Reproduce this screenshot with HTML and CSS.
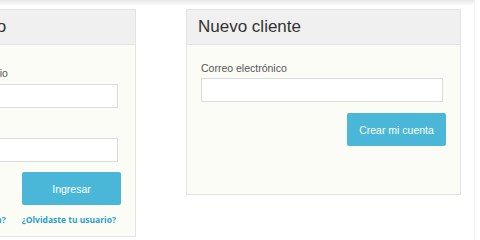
FILE: index.html
```html
<!DOCTYPE html>
<html lang="es">
<head>
  <meta charset="UTF-8" />
  <meta name="viewport" content="width=device-width, initial-scale=1.0"/>
  <title>Acceso</title>
  <link rel="stylesheet" href="styles.css">
</head>
<body>

<div class="shell">
  <div class="row">

    <div class="panel panel-login">
      <div class="panel-title">Cliente registrado</div>
      <div class="panel-body">
        <div class="field">
          <label class="label">Correo electrónico o usuario</label>
          <input class="input" type="text">
        </div>
        <div class="field">
          <label class="label">Contraseña</label>
          <input class="input" type="password">
        </div>
        <div class="actions">
          <button class="btn">Ingresar</button>
        </div>
        <div class="links">
          <a href="#">¿Olvidaste tu contraseña?</a>
          <a href="#">¿Olvidaste tu usuario?</a>
        </div>
      </div>
    </div>

    <div class="panel panel-new">
      <div class="panel-title">Nuevo cliente</div>
      <div class="panel-body">
        <div class="field">
          <label class="label">Correo electrónico</label>
          <input class="input" type="email">
        </div>
        <div class="actions">
          <button class="btn">Crear mi cuenta</button>
        </div>
      </div>
    </div>

  </div>
</div>

</body>
</html>
```

FILE: styles.css
```css
* {
  box-sizing: border-box;
  font-family: "Liberation Sans", Arial, sans-serif;
}

body {
  margin: 0;
  background-color: #fff;
  overflow: hidden;
}

.shell {
  width: 475px;
  height: 240px;
  border-right: 1px solid #f2f2f2;
  background: linear-gradient(#e8e8e8, #fff 6px) no-repeat;
}

.row {
  display: flex;
  align-items: flex-start;
  gap: 50px;
  margin-left: -139px;
  padding-top: 9px;
}

.panel {
  width: 275px;
  flex: none;
  background-color: #fcfcf7;
  border: 1px solid #e3e3e3;
}

.panel-title {
  height: 35px;
  padding: 0 0 1px 11px;
  line-height: 34px;
  font-size: 17px;
  color: #333;
  background-color: #f0f0f0;
  border-bottom: 1px solid #e2e2e2;
  white-space: nowrap;
}

.panel-body {
  padding: 16px 14px 48px 14px;
}

.panel-login .panel-body {
  padding-top: 21px;
  padding-bottom: 9px;
}

.field + .field {
  margin-top: 12px;
}

.label {
  display: block;
  font-size: 10.5px;
  line-height: 14px;
  color: #555;
  margin-bottom: 3px;
  white-space: nowrap;
}

.panel-login .label {
  margin-bottom: 4px;
}

.input {
  display: block;
  width: calc(100% - 3px);
  height: 24px;
  border: 1px solid #dcdcdc;
  background-color: #fff;
  outline: none;
}

.actions {
  display: flex;
  justify-content: flex-end;
  margin-top: 11px;
}

.panel-login .actions {
  margin-top: 10px;
}

.btn {
  width: 99px;
  height: 33px;
  border: none;
  border-radius: 2px;
  background-color: #4ab7d8;
  color: #fff;
  font-size: 10.5px;
  cursor: pointer;
}

.links {
  display: flex;
  justify-content: flex-end;
  gap: 16px;
  margin-top: 8px;
  margin-right: 5px;
  line-height: 14px;
}

.links a {
  font-family: "Open Sans", sans-serif;
  font-size: 8.5px;
  font-weight: 700;
  color: #2a9fc8;
  text-decoration: none;
  white-space: nowrap;
}
```
